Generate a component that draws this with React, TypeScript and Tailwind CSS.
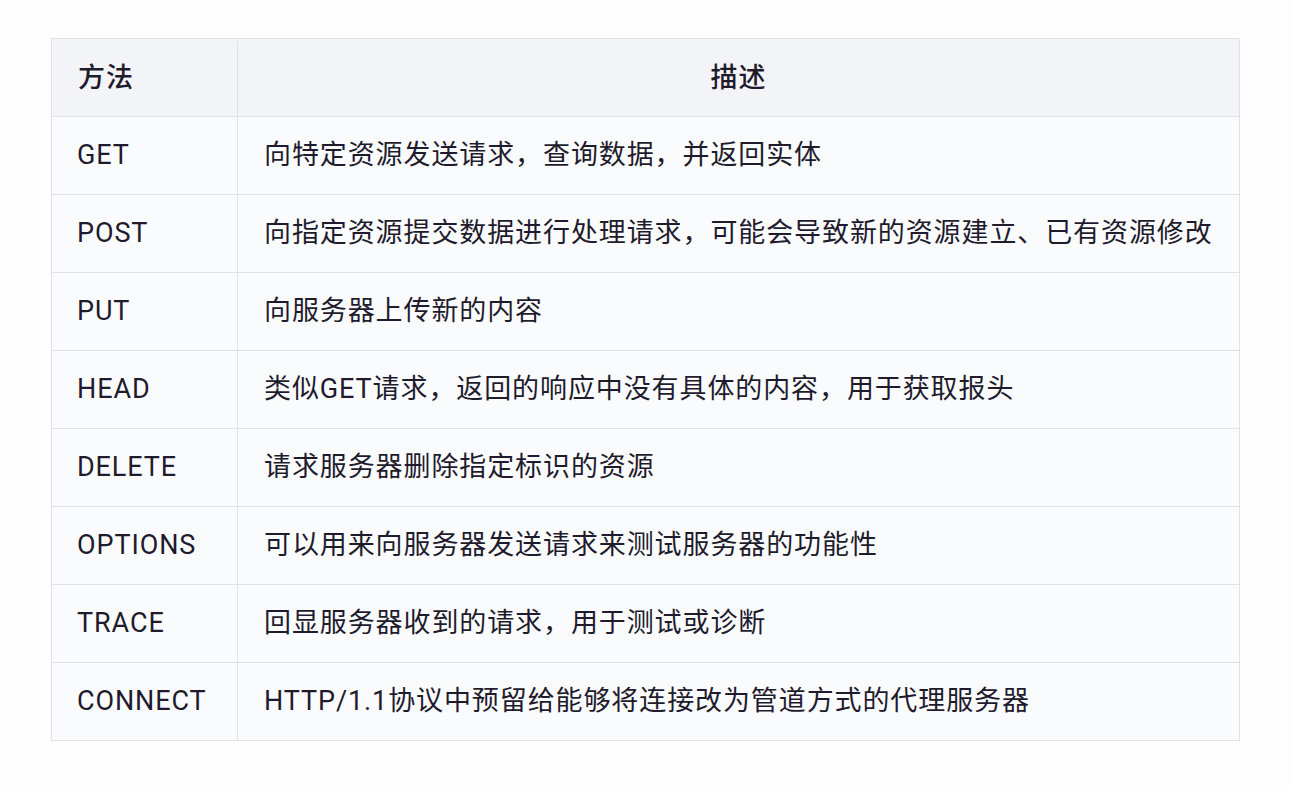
import React from 'react';

const ROWS = [
  { method: 'GET', desc: '向特定资源发送请求，查询数据，并返回实体' },
  { method: 'POST', desc: '向指定资源提交数据进行处理请求，可能会导致新的资源建立、已有资源修改' },
  { method: 'PUT', desc: '向服务器上传新的内容' },
  { method: 'HEAD', desc: '类似GET请求，返回的响应中没有具体的内容，用于获取报头' },
  { method: 'DELETE', desc: '请求服务器删除指定标识的资源' },
  { method: 'OPTIONS', desc: '可以用来向服务器发送请求来测试服务器的功能性' },
  { method: 'TRACE', desc: '回显服务器收到的请求，用于测试或诊断' },
  { method: 'CONNECT', desc: 'HTTP/1.1协议中预留给能够将连接改为管道方式的代理服务器' },
];

export default function App() {
  return (
    <div
      className="min-h-[786px] w-full bg-[#fdfdfe] pt-[38px] pl-[51px] text-[#1f1b2d]"
      style={{ fontFamily: 'Roboto, "Noto Sans CJK SC", sans-serif' }}
    >
      <div className="w-[1189px] border-t border-l border-r border-[#e0e1e6] bg-[#fafbfd] text-[27px] tracking-[0.9px]">
        {/* Header */}
        <div className="flex h-[78px] border-b border-[#e0e1e6] bg-[#f3f4f8] pt-[2px] font-medium">
          <div className="flex w-[186px] shrink-0 items-center border-r border-[#e0e1e6] pl-[26px]">方法</div>
          <div className="flex flex-1 items-center justify-center">描述</div>
        </div>

        {ROWS.map((row) => (
          <div key={row.method} className="flex h-[78px] border-b border-[#e0e1e6]">
            <div className="flex w-[186px] shrink-0 items-center border-r border-[#e0e1e6] pl-[25px]">{row.method}</div>
            <div className="flex flex-1 items-center pl-[26px] whitespace-nowrap">{row.desc}</div>
          </div>
        ))}
      </div>
    </div>
  );
}
